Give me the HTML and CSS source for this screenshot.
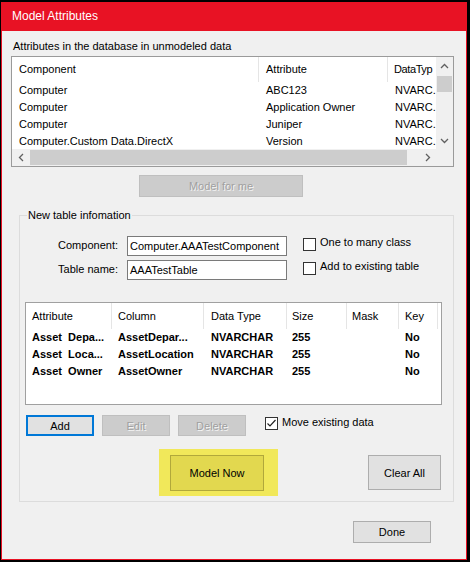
FILE: index.html
```html
<!DOCTYPE html>
<html>
<head>
<meta charset="utf-8">
<link rel="stylesheet" href="styles.css">
</head>
<body>
<div class="window">
  <div class="titlebar">Model Attributes</div>
  <div class="content">
    <div class="caption">Attributes in the database in unmodeled data</div>
    <div class="listview">
      <div class="lv-main">
        <div class="lv-cols">
          <div class="lv-head">
            <div class="lc c1">Component</div><div class="lc c2">Attribute</div><div class="lc c3 tight">DataTyp</div>
          </div>
          <div class="lv-row"><div class="lc c1">Computer</div><div class="lc c2">ABC123</div><div class="lc c3">NVARC.</div></div>
          <div class="lv-row"><div class="lc c1">Computer</div><div class="lc c2">Application Owner</div><div class="lc c3">NVARC.</div></div>
          <div class="lv-row"><div class="lc c1">Computer</div><div class="lc c2">Juniper</div><div class="lc c3">NVARC.</div></div>
          <div class="lv-row"><div class="lc c1">Computer.Custom Data.DirectX</div><div class="lc c2">Version</div><div class="lc c3">NVARC.</div></div>
        </div>
        <div class="vscroll">
          <div class="sb-btn"><svg width="9" height="6" viewBox="0 0 9 6"><polyline points="1,5 4.5,1.5 8,5" fill="none" stroke="#606060" stroke-width="1.3"/></svg></div>
          <div class="vthumb"></div>
          <div class="vtrack"></div>
          <div class="sb-btn"><svg width="9" height="6" viewBox="0 0 9 6"><polyline points="1,1 4.5,4.5 8,1" fill="none" stroke="#606060" stroke-width="1.3"/></svg></div>
        </div>
      </div>
      <div class="hscroll">
        <div class="sb-btn"><svg width="6" height="9" viewBox="0 0 6 9"><polyline points="5,1 1.5,4.5 5,8" fill="none" stroke="#606060" stroke-width="1.3"/></svg></div>
        <div class="hthumb"></div>
        <div class="htrack"></div>
        <div class="sb-btn"><svg width="6" height="9" viewBox="0 0 6 9"><polyline points="1,1 4.5,4.5 1,8" fill="none" stroke="#606060" stroke-width="1.3"/></svg></div>
        <div class="corner"></div>
      </div>
    </div>

    <div class="btn disabled model-for-me">Model for me</div>

    <div class="group">
      <span class="legend">New table infomation</span>
      <div class="form-row first">
        <div class="flabel">Component:</div>
        <div class="textbox">Computer.AAATestComponent</div>
        <div class="check"></div>
        <div class="clabel">One to many class</div>
      </div>
      <div class="form-row">
        <div class="flabel">Table name:</div>
        <div class="textbox">AAATestTable</div>
        <div class="check"></div>
        <div class="clabel">Add to existing table</div>
      </div>

      <div class="grid">
        <div class="g-head">
          <div class="gc g1">Attribute</div><div class="gc g2">Column</div><div class="gc g3">Data Type</div><div class="gc g4">Size</div><div class="gc g5">Mask</div><div class="gc g6">Key</div>
        </div>
        <div class="g-row">
          <div class="gc g1">Asset&nbsp; Depa...</div><div class="gc g2">AssetDepar...</div><div class="gc g3">NVARCHAR</div><div class="gc g4">255</div><div class="gc g5"></div><div class="gc g6">No</div>
        </div>
        <div class="g-row">
          <div class="gc g1">Asset&nbsp; Loca...</div><div class="gc g2">AssetLocation</div><div class="gc g3">NVARCHAR</div><div class="gc g4">255</div><div class="gc g5"></div><div class="gc g6">No</div>
        </div>
        <div class="g-row">
          <div class="gc g1">Asset&nbsp; Owner</div><div class="gc g2">AssetOwner</div><div class="gc g3">NVARCHAR</div><div class="gc g4">255</div><div class="gc g5"></div><div class="gc g6">No</div>
        </div>
      </div>

      <div class="btn-row">
        <div class="btn small focused">Add</div>
        <div class="btn small disabled">Edit</div>
        <div class="btn small disabled">Delete</div>
        <div class="check checked move"><svg width="11" height="11" viewBox="0 0 11 11"><polyline points="1.5,5.5 4,8 9.5,2" fill="none" stroke="#222" stroke-width="1.2"/></svg></div>
        <div class="clabel">Move existing data</div>
      </div>

      <div class="model-row">
        <div class="highlight"><div class="btn model-now">Model Now</div></div>
        <div class="btn clear-all">Clear All</div>
      </div>
    </div>

    <div class="btn done">Done</div>
  </div>
</div>
</body>
</html>
```

FILE: styles.css
```css
* { box-sizing: border-box; }
html, body { margin: 0; padding: 0; }
body {
  background: #000;
  width: 470px;
  height: 562px;
  overflow: hidden;
  font-family: "Liberation Sans", Arial, sans-serif;
  font-size: 11px;
  color: #000;
}
.window {
  margin: 2px 0 0 1px;
  width: 466px;
  height: 558px;
  border: 1px solid #e81224;
  background: #f0f0f0;
  display: flex;
  flex-direction: column;
}
.titlebar {
  height: 28px;
  background: #e81224;
  color: #fff;
  font-size: 12px;
  padding-left: 10px;
  display: flex;
  align-items: center;
  padding-bottom: 2px;
}
.content {
  display: flex;
  flex-direction: column;
  align-items: flex-start;
}
.caption {
  margin: 8px 0 0 11px;
  line-height: 15px;
  height: 15px;
}
.listview {
  margin: 2px 0 0 9px;
  width: 443px;
  height: 111px;
  border: 1px solid #9a9a9a;
  background: #fff;
  display: flex;
  flex-direction: column;
}
.lv-main { display: flex; height: 92px; }
.lv-cols { width: 424px; overflow: hidden; }
.lv-head { display: flex; height: 25px; }
.lv-head .lc { line-height: 25px; border-right: 1px solid #e5e5e5; }
.lv-head .c3 { border-right: none; }
.lv-row { display: flex; height: 17px; }
.lv-row .lc { line-height: 17px; }
.lc { padding-left: 7px; white-space: nowrap; overflow: hidden; flex: none; }
.c1 { width: 247px; }
.c2 { width: 129px; }
.c3 { width: 48px; }
.lc.tight { letter-spacing: -0.4px; padding-left: 6px; }

.vscroll {
  width: 17px;
  background: #f0f0f0;
  display: flex;
  flex-direction: column;
}
.sb-btn {
  width: 17px;
  height: 17px;
  flex: none;
  display: flex;
  align-items: center;
  justify-content: center;
}
.vthumb { margin: 2px 1px 0 1px; height: 16px; background: #cdcdcd; flex: none; }
.vtrack { flex: 1; }
.hscroll {
  height: 17px;
  background: #f0f0f0;
  display: flex;
}
.hthumb { margin: 1px 0 1px 1px; width: 377px; background: #cdcdcd; flex: none; }
.htrack { flex: 1; }
.corner { width: 17px; flex: none; background: #f0f0f0; }

.btn {
  background: #e1e1e1;
  border: 1px solid #adadad;
  display: flex;
  align-items: center;
  justify-content: center;
  flex: none;
}
.btn.disabled {
  background: #cccccc;
  border-color: #bfbfbf;
  color: #a0a0a0;
  text-shadow: 1px 1px 0 #f4f4f4;
}
.model-for-me {
  margin: 8px 0 0 137px;
  width: 164px;
  height: 22px;
}
.group {
  position: relative;
  margin: 18px 0 0 17px;
  width: 435px;
  height: 287px;
  border: 1px solid #dcdcdc;
  display: flex;
  flex-direction: column;
}
.legend {
  position: absolute;
  top: -8px;
  left: 7px;
  padding: 0 1px;
  background: #f0f0f0;
  line-height: 15px;
}
.form-row {
  display: flex;
  align-items: flex-start;
  margin-top: 4px;
  height: 20px;
}
.form-row.first { margin-top: 20px; }
.flabel {
  width: 98px;
  text-align: right;
  line-height: 18px;
}
.textbox {
  margin-left: 9px;
  width: 160px;
  height: 20px;
  border: 1px solid #7a7a7a;
  background: #fff;
  line-height: 18px;
  padding-left: 2px;
  white-space: nowrap;
  overflow: hidden;
}
.check {
  margin: 2px 0 0 16px;
  width: 13px;
  height: 13px;
  border: 1px solid #333;
  background: #fff;
  flex: none;
  display: flex;
  align-items: center;
  justify-content: center;
}
.clabel {
  margin-left: 4px;
  line-height: 13px;
  white-space: nowrap;
}
.grid {
  margin: 22px 0 0 5px;
  width: 417px;
  height: 103px;
  border: 1px solid #a0a0a0;
  background: #fff;
  flex: none;
}
.g-head { display: flex; height: 26px; }
.g-head .gc { line-height: 26px; border-right: 1px solid #e5e5e5; }
.g-row { display: flex; height: 17px; font-weight: bold; }
.g-row .gc { line-height: 17px; }
.gc { flex: none; white-space: nowrap; overflow: hidden; padding-left: 6px; }
.g1 { width: 86px; }
.g2 { width: 92px; padding-left: 6px; }
.g3 { width: 83px; padding-left: 7px; }
.g4 { width: 60px; padding-left: 5px; }
.g5 { width: 52px; padding-left: 5px; }
.g6 { width: 39px; padding-left: 6px; }

.btn-row {
  display: flex;
  align-items: flex-start;
  margin: 10px 0 0 6px;
  height: 21px;
}
.btn.small { width: 68px; height: 21px; margin-right: 8px; }
.btn.focused { border: 2px solid #0078d7; }
.check.move { margin-left: 11px; }
.btn-row .clabel { line-height: 14px; }

.model-row {
  display: flex;
  align-items: flex-start;
  margin: 13px 0 0 139px;
}
.highlight {
  width: 119px;
  height: 47px;
  background: #f1e85a;
  padding: 6px 0 0 11px;
}
.btn.model-now {
  width: 94px;
  height: 36px;
  background: #e2d84f;
  border-color: #b1a83b;
}
.btn.clear-all {
  margin: 6px 0 0 90px;
  width: 73px;
  height: 35px;
}
.btn.done {
  margin: 19px 0 0 351px;
  width: 78px;
  height: 22px;
}
```
